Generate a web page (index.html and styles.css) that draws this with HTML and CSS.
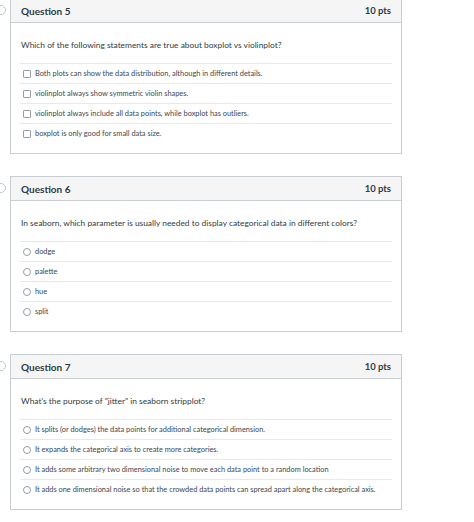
FILE: index.html
```html
<!DOCTYPE html>
<html>
<head>
<meta charset="utf-8">
<link rel="stylesheet" href="styles.css">
</head>
<body>
<div class="quiz">
  <div class="card first">
    <span class="marker"></span>
    <div class="card-header">
      <span class="title">Question 5</span>
      <span class="pts">10 pts</span>
    </div>
    <div class="card-body">
      <div class="question">Which of the following statements are true about boxplot vs violinplot?</div>
      <div class="answers">
        <div class="answer"><span class="check"></span><span class="label">Both plots can show the data distribution, although in different details.</span></div>
        <div class="answer"><span class="check"></span><span class="label">violinplot always show symmetric violin shapes.</span></div>
        <div class="answer"><span class="check"></span><span class="label">violinplot always include all data points, while boxplot has outliers.</span></div>
        <div class="answer"><span class="check"></span><span class="label">boxplot is only good for small data size.</span></div>
      </div>
    </div>
  </div>

  <div class="card">
    <span class="marker"></span>
    <div class="card-header">
      <span class="title">Question 6</span>
      <span class="pts">10 pts</span>
    </div>
    <div class="card-body">
      <div class="question">In seaborn, which parameter is usually needed to display categorical data in different colors?</div>
      <div class="answers">
        <div class="answer"><span class="radio"></span><span class="label">dodge</span></div>
        <div class="answer"><span class="radio"></span><span class="label">palette</span></div>
        <div class="answer"><span class="radio"></span><span class="label">hue</span></div>
        <div class="answer"><span class="radio"></span><span class="label">split</span></div>
      </div>
    </div>
  </div>

  <div class="card">
    <span class="marker"></span>
    <div class="card-header">
      <span class="title">Question 7</span>
      <span class="pts">10 pts</span>
    </div>
    <div class="card-body">
      <div class="question">What's the purpose of "jitter" in seaborn stripplot?</div>
      <div class="answers">
        <div class="answer"><span class="radio"></span><span class="label">It splits (or dodges) the data points for additional categorical dimension.</span></div>
        <div class="answer"><span class="radio"></span><span class="label">It expands the categorical axis to create more categories.</span></div>
        <div class="answer"><span class="radio"></span><span class="label">It adds some arbitrary two dimensional noise to move each data point to a random location</span></div>
        <div class="answer"><span class="radio"></span><span class="label">It adds one dimensional noise so that the crowded data points can spread apart along the categorical axis.</span></div>
      </div>
    </div>
  </div>
</div>
</body>
</html>
```

FILE: styles.css
```css
html, body {
  margin: 0;
  padding: 0;
  background: #ffffff;
}

body {
  font-family: Lato, "Open Sans", "Liberation Sans", sans-serif;
  color: #2d3b45;
  overflow: hidden;
}

.quiz {
  display: flex;
  flex-direction: column;
  gap: 22px;
  padding-left: 10px;
  width: 392px;
}

.card {
  position: relative;
  border: 1px solid #c7cdd1;
  background: #ffffff;
}

.card.first {
  margin-top: -2px;
}

.marker {
  position: absolute;
  left: -15px;
  top: 6px;
  width: 8px;
  height: 8px;
  border: 1px solid #c3c8cc;
  border-radius: 50%;
  background: #ffffff;
}

.card-header {
  display: flex;
  align-items: center;
  justify-content: space-between;
  height: 23px;
  padding: 0 10px;
  background: #f5f5f5;
  border-bottom: 1px solid #c7cdd1;
}

.title {
  font-size: 10px;
  font-weight: 700;
  color: #2d3b45;
}

.pts {
  font-size: 9.5px;
  font-weight: 700;
  color: #2d3b45;
}

.card-body {
  padding: 0 9px 10px;
}

.question {
  height: 40px;
  box-sizing: border-box;
  padding: 16px 0 0 1px;
  font-size: 8.4px;
  line-height: 12px;
}

.answer {
  display: flex;
  align-items: center;
  height: 19px;
  border-top: 1px solid #e6e8ea;
  padding-left: 3px;
  gap: 4px;
  font-size: 7.4px;
}

.check {
  width: 6px;
  height: 6px;
  border: 1px solid #959ea5;
  border-radius: 1px;
  flex: none;
}

.radio {
  width: 6px;
  height: 6px;
  border: 1px solid #959ea5;
  border-radius: 50%;
  flex: none;
}

.label {
  color: #3a4650;
  white-space: nowrap;
}
```
